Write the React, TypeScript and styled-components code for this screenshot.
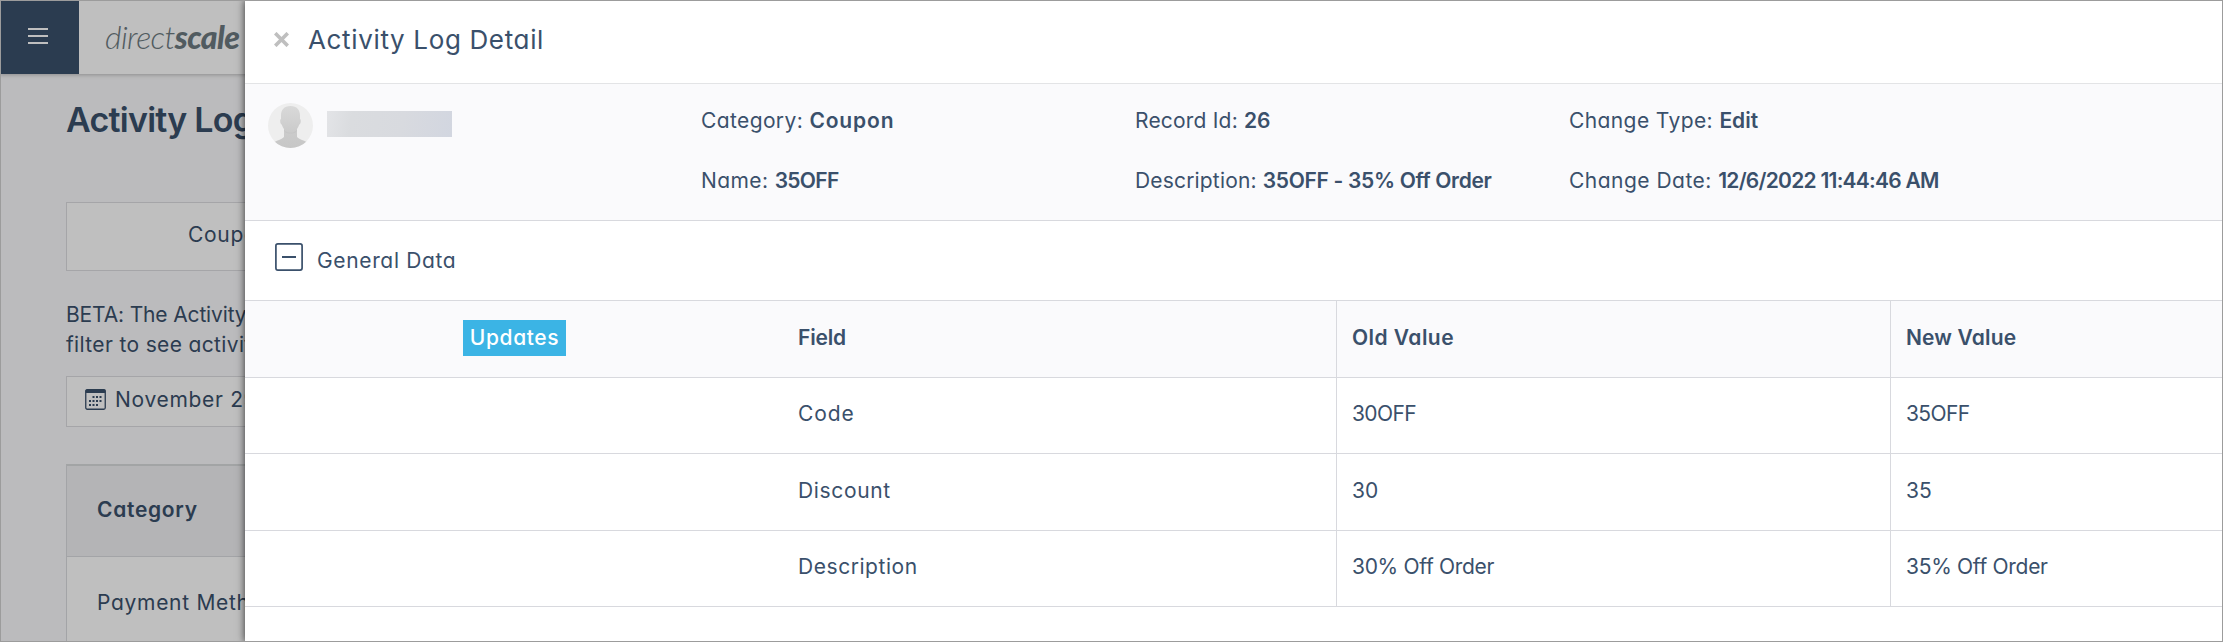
import React from 'react';
import styled, { createGlobalStyle, css } from 'styled-components';

const ink = '#3a506b';
const rule = '#d8d9de';

const GlobalStyle = createGlobalStyle`
  * { box-sizing: border-box; }
  body {
    margin: 0;
    overflow: hidden;
    color: ${ink};
    font: 400 21px/30px Inter, "Liberation Sans", sans-serif;
    font-feature-settings: "cv11";
    white-space: nowrap;
  }
`;

const Frame = styled.div`
  position: relative;
  width: 2223px;
  height: 642px;
  overflow: hidden;
  background: #fafafc;
`;

const Outline = styled.div`
  position: absolute;
  inset: 0;
  border: 1px solid #9c9c9c;
  pointer-events: none;
`;

const Page = styled.div`
  width: 100%;
  height: 100%;
`;

const TopBar = styled.header`
  display: flex;
  align-items: center;
  height: 74px;
  background: #fff;
  box-shadow: 0 1px 4px rgba(0, 0, 0, 0.25);
`;

const MenuButton = styled.div`
  display: flex;
  flex-direction: column;
  justify-content: center;
  align-items: center;
  gap: 5px;
  width: 79px;
  height: 74px;
  padding-bottom: 2px;
  padding-right: 3px;
  background: ${ink};
`;

const MenuLine = styled.span`
  width: 20px;
  height: 2px;
  background: #fff;
`;

const Logo = styled.div`
  margin-left: 26px;
  font: italic 300 32px/40px Lato, "Liberation Sans", sans-serif;
  letter-spacing: -0.6px;
  color: #6d7a80;
  b { font-weight: 900; }
`;

const Tracked = styled.span<{ $track?: number; $bold?: boolean }>`
  letter-spacing: ${p => p.$track ?? 0}px;
  font-weight: ${p => (p.$bold ? 600 : 'inherit')};
`;

const PageBody = styled.main`
  padding: 0 0 0 66px;
`;

const PageTitle = styled.h1`
  margin: 0;
  padding-top: 22px;
  height: 128px;
  font-size: 34px;
  line-height: 48px;
  font-weight: 560;
  letter-spacing: -0.75px;
`;

const Tabs = styled.div`
  height: 69px;
  border: 1px solid #dcdde1;
  background: #fff;
  padding: 17px 0 0 121px;
  letter-spacing: 0.7px;
`;

const Note = styled.p`
  margin: 29px 0 0;
  height: 76px;
  letter-spacing: -0.15px;
`;

const DateField = styled.div`
  display: flex;
  align-items: center;
  gap: 9px;
  height: 51px;
  padding: 0 0 4px 18px;
  border: 1px solid #dcdde1;
  background: #fff;
  letter-spacing: 0.7px;
`;

const PageTable = styled.div`
  margin-top: 37px;
  height: 200px;
  border: 1px solid #dadbdf;
  border-top: 2px solid #d8dbdd;
  background: #fff;
`;

const PageTableRow = styled.div<{ $head?: boolean }>`
  display: flex;
  align-items: center;
  height: ${p => (p.$head ? 91 : 93)}px;
  padding: 0 0 ${p => (p.$head ? 3 : 1)}px 30px;
  letter-spacing: 0.7px;
  ${p => p.$head && css`
    background: #f0f1f3;
    border-bottom: 1px solid #dadbdf;
    font-weight: 600;
  `}
`;

const Scrim = styled.div`
  position: absolute;
  inset: 0;
  background: rgba(0, 0, 0, 0.25);
`;

const Drawer = styled.section`
  position: absolute;
  top: 0;
  left: 245px;
  right: 0;
  bottom: 0;
  background: #fff;
  box-shadow: 0 0 8px rgba(0, 0, 0, 0.75);
`;

const DrawerHeader = styled.div`
  display: flex;
  align-items: center;
  height: 84px;
  padding: 0 0 4px 29px;
  gap: 19px;
  border-bottom: 1px solid #e3e4e6;
`;

const DrawerTitle = styled.h2`
  margin: 0;
  font-size: 26px;
  line-height: 36px;
  font-weight: 400;
  letter-spacing: 0.65px;
`;

const Summary = styled.div`
  display: grid;
  grid-template-columns: 433px 434px 434px 1fr;
  height: 137px;
  padding: 18px 0 0 23px;
  background: #fafafc;
  border-bottom: 1px solid ${rule};
`;

const User = styled.div`
  display: flex;
  align-items: flex-start;
  gap: 14px;
  padding-top: 1px;
`;

const Redacted = styled.div`
  width: 125px;
  height: 26px;
  margin-top: 8px;
  background: linear-gradient(100deg, #e3e4e7 0%, #dadcdf 20%, #d8dadf 60%, #d2d6e0 100%);
`;

const Facts = styled.div`
  display: grid;
  grid-auto-rows: 60px;
`;

const Fact = styled.div`
  padding-top: 4px;
`;

const SectionHead = styled.div`
  display: flex;
  align-items: center;
  gap: 14px;
  height: 80px;
  padding-left: 30px;
  border-bottom: 1px solid ${rule};
  letter-spacing: 0.65px;
  svg { margin-bottom: 7px; }
`;

const Row = styled.div<{ $head?: boolean; $h: number }>`
  display: grid;
  grid-template-columns: 1091px 554px 1fr;
  height: ${p => p.$h}px;
  border-bottom: 1px solid ${rule};
  ${p => p.$head && css`
    background: #fafafc;
    font-weight: 600;
  `}
`;

const Cell = styled.div`
  display: flex;
  align-items: center;
  padding: 0 0 3px 15px;
  border-left: 1px solid ${rule};
`;

const FieldCell = styled.div`
  display: grid;
  grid-template-columns: 335px 1fr;
  align-items: center;
  padding: 0 0 3px 218px;
`;

const Badge = styled.span`
  justify-self: start;
  width: 103px;
  height: 36px;
  margin-top: 1px;
  line-height: 36px;
  text-align: center;
  color: #fff;
  background: #3bb4e5;
  font-weight: 500;
  letter-spacing: 0.6px;
`;

const CalendarIcon = () => (
  <svg width="21" height="21" viewBox="0 0 21 21" fill={ink}>
    <rect x="0.75" y="0.75" width="19.5" height="19.5" rx="1.5" fill="none" stroke={ink} strokeWidth="1.3" />
    <rect x="0.5" y="0.5" width="20" height="3.5" rx="1" />
    {[[7.5, 7.5], [11, 7.5], [14.5, 7.5], [4, 11.5], [7.5, 11.5], [11, 11.5], [14.5, 11.5], [4, 15.5], [7.5, 15.5], [11, 15.5]].map(([x, y]) => (
      <rect key={`${x}-${y}`} x={x} y={y - 0.5} width="2" height="2" />
    ))}
  </svg>
);

const CloseIcon = () => (
  <svg width="15" height="15" viewBox="0 0 15 15" stroke="#bfbfbf" strokeWidth="3.7">
    <path d="M1.2 1.2 13.8 13.8M13.8 1.2 1.2 13.8" />
  </svg>
);

const CollapseIcon = () => (
  <svg width="28" height="28" viewBox="0 0 28 28" fill="none" stroke={ink} strokeWidth="1.7">
    <rect x="0.9" y="0.9" width="26.2" height="26.2" rx="2" />
    <path d="M7 14h14" strokeWidth="2" />
  </svg>
);

const Avatar = () => (
  <svg width="45" height="45" viewBox="0 0 45 45">
    <defs>
      <clipPath id="disc"><circle cx="22.5" cy="22.5" r="22.5" /></clipPath>
      <linearGradient id="skin" x1="0" y1="0" x2="0" y2="1">
        <stop offset="0" stopColor="#d9d9d9" />
        <stop offset="0.6" stopColor="#cbcbcb" />
        <stop offset="1" stopColor="#c6c6c6" />
      </linearGradient>
    </defs>
    <g clipPath="url(#disc)">
      <rect width="45" height="45" fill="#eee" />
      <path fill="url(#skin)" d="M22.5 3c6.5 0 9.5 4 9.5 9.5V16c1.3 0 1 5-.8 5.5-.6 2.5-1.6 3.5-2.2 4.5V34c2 2 6.5 3.5 9.5 5V46H6.5v-7c3-1.5 7.5-3 9.5-5v-8c-.6-1-1.6-2-2.2-4.5C12 21 11.7 16 13 16v-3.5C13 7 16 3 22.5 3z" />
      <path d="M16 27.5c3 3.5 10 3.5 13 0" fill="none" stroke="#c3c3c3" strokeWidth="0.7" />
    </g>
  </svg>
);

type FactItem = { label: string; value: string; lt: number; vt: number };

const summary: FactItem[][] = [
  [
    { label: 'Category', value: 'Coupon', lt: 0.38, vt: 0.85 },
    { label: 'Name', value: '35OFF', lt: 0.4, vt: -0.7 },
  ],
  [
    { label: 'Record Id', value: '26', lt: 0.2, vt: 0 },
    { label: 'Description', value: '35OFF - 35% Off Order', lt: 0.17, vt: -0.32 },
  ],
  [
    { label: 'Change Type', value: 'Edit', lt: 0.4, vt: 0 },
    { label: 'Change Date', value: '12/6/2022 11:44:46 AM', lt: 0.48, vt: -0.75 },
  ],
];

const changes = [
  { field: 'Code', before: '30OFF', after: '35OFF', h: 76, ft: 0.9, vt: -0.6 },
  { field: 'Discount', before: '30', after: '35', h: 77, ft: 0.65, vt: 0 },
  { field: 'Description', before: '30% Off Order', after: '35% Off Order', h: 76, ft: 0.55, vt: -0.3 },
];

export default function App() {
  return (
    <Frame>
      <GlobalStyle />
      <Page>
        <TopBar>
          <MenuButton><MenuLine /><MenuLine /><MenuLine /></MenuButton>
          <Logo>direct<b>scale</b></Logo>
        </TopBar>
        <PageBody>
          <PageTitle>Activity Log</PageTitle>
          <Tabs>Coupons</Tabs>
          <Note>
            BETA: The Activity Log<br />
            <Tracked $track={0.35}>filter to see activity</Tracked>
          </Note>
          <DateField><CalendarIcon />November 29</DateField>
          <PageTable>
            <PageTableRow $head>Category</PageTableRow>
            <PageTableRow>Payment Method</PageTableRow>
          </PageTable>
        </PageBody>
      </Page>
      <Scrim />
      <Drawer>
        <DrawerHeader><CloseIcon /><DrawerTitle>Activity Log Detail</DrawerTitle></DrawerHeader>
        <Summary>
          <User><Avatar /><Redacted /></User>
          {summary.map((group, i) => (
            <Facts key={i}>
              {group.map(f => (
                <Fact key={f.label}>
                  <Tracked $track={f.lt}>{f.label}: </Tracked>
                  <Tracked $track={f.vt} $bold>{f.value}</Tracked>
                </Fact>
              ))}
            </Facts>
          ))}
        </Summary>
        <SectionHead><CollapseIcon />General Data</SectionHead>
        <Row $head $h={77}>
          <FieldCell><Badge>Updates</Badge><Tracked $track={-0.2}>Field</Tracked></FieldCell>
          <Cell><Tracked $track={0.45}>Old Value</Tracked></Cell>
          <Cell><Tracked $track={0.15}>New Value</Tracked></Cell>
        </Row>
        {changes.map(c => (
          <Row key={c.field} $h={c.h}>
            <FieldCell><span /><Tracked $track={c.ft}>{c.field}</Tracked></FieldCell>
            <Cell><Tracked $track={c.vt}>{c.before}</Tracked></Cell>
            <Cell><Tracked $track={c.vt}>{c.after}</Tracked></Cell>
          </Row>
        ))}
      </Drawer>
      <Outline />
    </Frame>
  );
}
